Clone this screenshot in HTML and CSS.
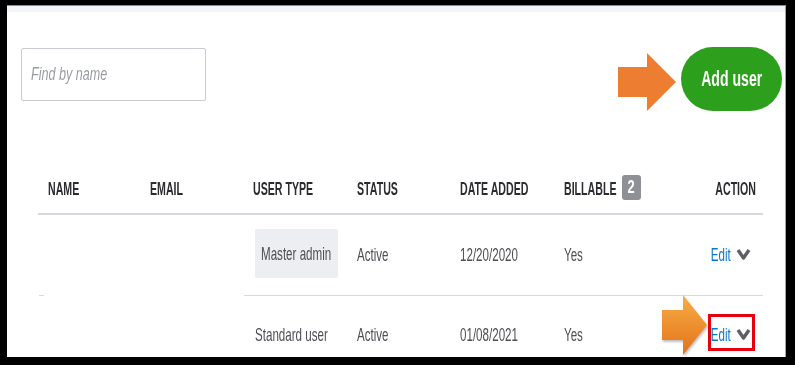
FILE: index.html
```html
<!DOCTYPE html>
<html lang="en">
<head>
<meta charset="utf-8">
<title>Manage users</title>
<link rel="stylesheet" href="styles.css">
</head>
<body>
<div class="screen">
  <div class="topstrip"></div>
  <div class="toolbar">
    <div class="search"><span class="ph">Find by name</span></div>
    <button class="btn" type="button"><span class="sx sx-c">Add user</span></button>
    <svg class="arrow1" width="58" height="58" viewBox="0 0 58 58"><polygon points="0,14 29,14 29,0 58,29 29,58 29,44 0,44" fill="#ed7d31"/></svg>
  </div>
  <div class="table">
    <div class="thead">
      <div class="th first"><span class="sx">NAME</span></div>
      <div class="th"><span class="sx">EMAIL</span></div>
      <div class="th"><span class="sx">USER TYPE</span></div>
      <div class="th"><span class="sx">STATUS</span></div>
      <div class="th"><span class="sx">DATE ADDED</span></div>
      <div class="th billable"><span class="sx">BILLABLE</span><span class="badge"><span class="sx sx-c">2</span></span></div>
      <div class="th last"><span class="sx sx-r">ACTION</span></div>
    </div>
    <div class="row row1">
      <div class="td first"></div>
      <div class="td"></div>
      <div class="td"><span class="chip"><span class="sx">Master admin</span></span></div>
      <div class="td"><span class="sx">Active</span></div>
      <div class="td"><span class="sx">12/20/2020</span></div>
      <div class="td"><span class="sx">Yes</span></div>
      <div class="td action">
        <span class="edit sx sx-r">Edit</span>
        <svg class="chev" width="15" height="12" viewBox="0 0 15 12"><polyline points="2,2 7.5,10 13,2" fill="none" stroke="#5d5f64" stroke-width="3.4" stroke-linejoin="round"/></svg>
      </div>
    </div>
    <div class="divider"><span class="stub"></span><span class="line"></span></div>
    <div class="row row2">
      <div class="td first"></div>
      <div class="td"></div>
      <div class="td"><span class="plain"><span class="sx">Standard user</span></span></div>
      <div class="td"><span class="sx">Active</span></div>
      <div class="td"><span class="sx">01/08/2021</span></div>
      <div class="td"><span class="sx">Yes</span></div>
      <div class="td action">
        <span class="edit sx sx-r">Edit</span>
        <svg class="chev" width="15" height="12" viewBox="0 0 15 12"><polyline points="2,2 7.5,10 13,2" fill="none" stroke="#5d5f64" stroke-width="3.4" stroke-linejoin="round"/></svg>
        <span class="redbox"></span>
        <svg class="arrow2" width="48" height="62" viewBox="0 0 48 62">
          <defs>
            <linearGradient id="og" x1="0" y1="0" x2="0" y2="1">
              <stop offset="0" stop-color="#f9ad45"/>
              <stop offset="1" stop-color="#e2731a"/>
            </linearGradient>
          </defs>
          <polygon points="2,16 23,16 23,1 47,31 23,61 23,46 2,46" fill="url(#og)"/>
        </svg>
      </div>
    </div>
  </div>
</div>
</body>
</html>
```
FILE: styles.css
```css
* { box-sizing: border-box; }
html, body { margin: 0; }
body {
  background: #000;
  width: 795px;
  height: 365px;
  padding: 5px 9px 8px 7px;
  font-family: "Liberation Sans", Arial, sans-serif;
}
.screen {
  width: 779px;
  height: 352px;
  background: #fff;
  border-top: 1px solid #8c8c8c;
  border-right: 1px solid #a5a5a5;
  overflow: hidden;
}
.topstrip {
  height: 6px;
  background: #f3f5f9;
}
.sx {
  display: inline-block;
  transform: scaleX(0.61);
  transform-origin: left center;
  white-space: nowrap;
}
.sx-r { transform-origin: right center; }
.sx-c { transform-origin: center center; }

.toolbar {
  position: relative;
  display: flex;
  justify-content: space-between;
  align-items: flex-start;
  padding: 0 3px 0 14px;
  height: 99px;
}
.search {
  margin-top: 36px;
  width: 185px;
  height: 53px;
  border: 1px solid #c9ccd1;
  border-radius: 2px;
  display: flex;
  align-items: center;
  padding-left: 9px;
}
.ph {
  display: inline-block;
  font-style: italic;
  font-size: 18px;
  color: #9a9ca2;
  transform: scaleX(0.7);
  transform-origin: left center;
  white-space: nowrap;
}
.btn {
  margin-top: 35px;
  width: 101px;
  height: 64px;
  border: 0;
  border-radius: 32px;
  background: #2ca01c;
  color: #fff;
  font-family: "Liberation Sans", Arial, sans-serif;
  font-weight: bold;
  font-size: 22px;
  display: flex;
  align-items: center;
  justify-content: center;
  padding: 0;
}
.btn .sx { transform: scaleX(0.64); }
.arrow1 {
  position: absolute;
  left: 611px;
  top: 41px;
}

.table {
  margin: 54px 0 0 31px;
  width: 725px;
}
.thead, .row {
  display: grid;
  grid-template-columns: 112px 103px 104px 103px 104px 96px 1fr;
}
.thead {
  height: 50px;
  border-bottom: 2px solid #d5d8dd;
}
.th {
  display: flex;
  align-items: center;
  font-weight: bold;
  font-size: 18px;
  color: #2b2c30;
}
.th .sx { transform: scaleX(0.59); }
.th.first, .td.first { padding-left: 10px; }
.th.last { justify-content: flex-end; padding-right: 7px; }
.th.last .sx { transform-origin: right center; }
.billable { position: relative; }
.badge {
  position: absolute;
  left: 58px;
  top: 10px;
  width: 19px;
  height: 25px;
  border-radius: 3px;
  background: #8d9095;
  color: #fff;
  display: flex;
  align-items: center;
  justify-content: center;
  font-size: 18px;
}
.badge .sx { transform: scaleX(0.72); }

.row1 { height: 80px; }
.row2 { height: 78px; }
.td {
  display: flex;
  align-items: center;
  font-size: 19px;
  color: #4d4f54;
}
.chip {
  margin-left: 2px;
  width: 83px;
  height: 49px;
  background: #eceef1;
  border-radius: 2px;
  display: flex;
  align-items: center;
  padding-left: 6px;
  margin-top: -3px;
}
.plain { margin-left: 2px; }
.action {
  position: relative;
  justify-content: flex-end;
  padding-right: 12px;
  gap: 5px;
}
.edit { color: #0d77c4; }
.chev { display: block; margin-top: -2px; }
.redbox {
  position: absolute;
  right: 8px;
  top: 18px;
  width: 47px;
  height: 37px;
  border: 3px solid #e8000f;
}
.arrow2 {
  position: absolute;
  left: 0;
  top: -2px;
  filter: drop-shadow(1px 2px 1px rgba(0, 0, 0, 0.25));
}

.divider {
  display: flex;
  align-items: center;
  height: 1px;
}
.stub {
  margin-left: 1px;
  width: 5px;
  height: 1px;
  background: #d6d9dd;
}
.line {
  margin-left: 200px;
  flex: 1;
  height: 1px;
  background: #d6d9dd;
}
```
